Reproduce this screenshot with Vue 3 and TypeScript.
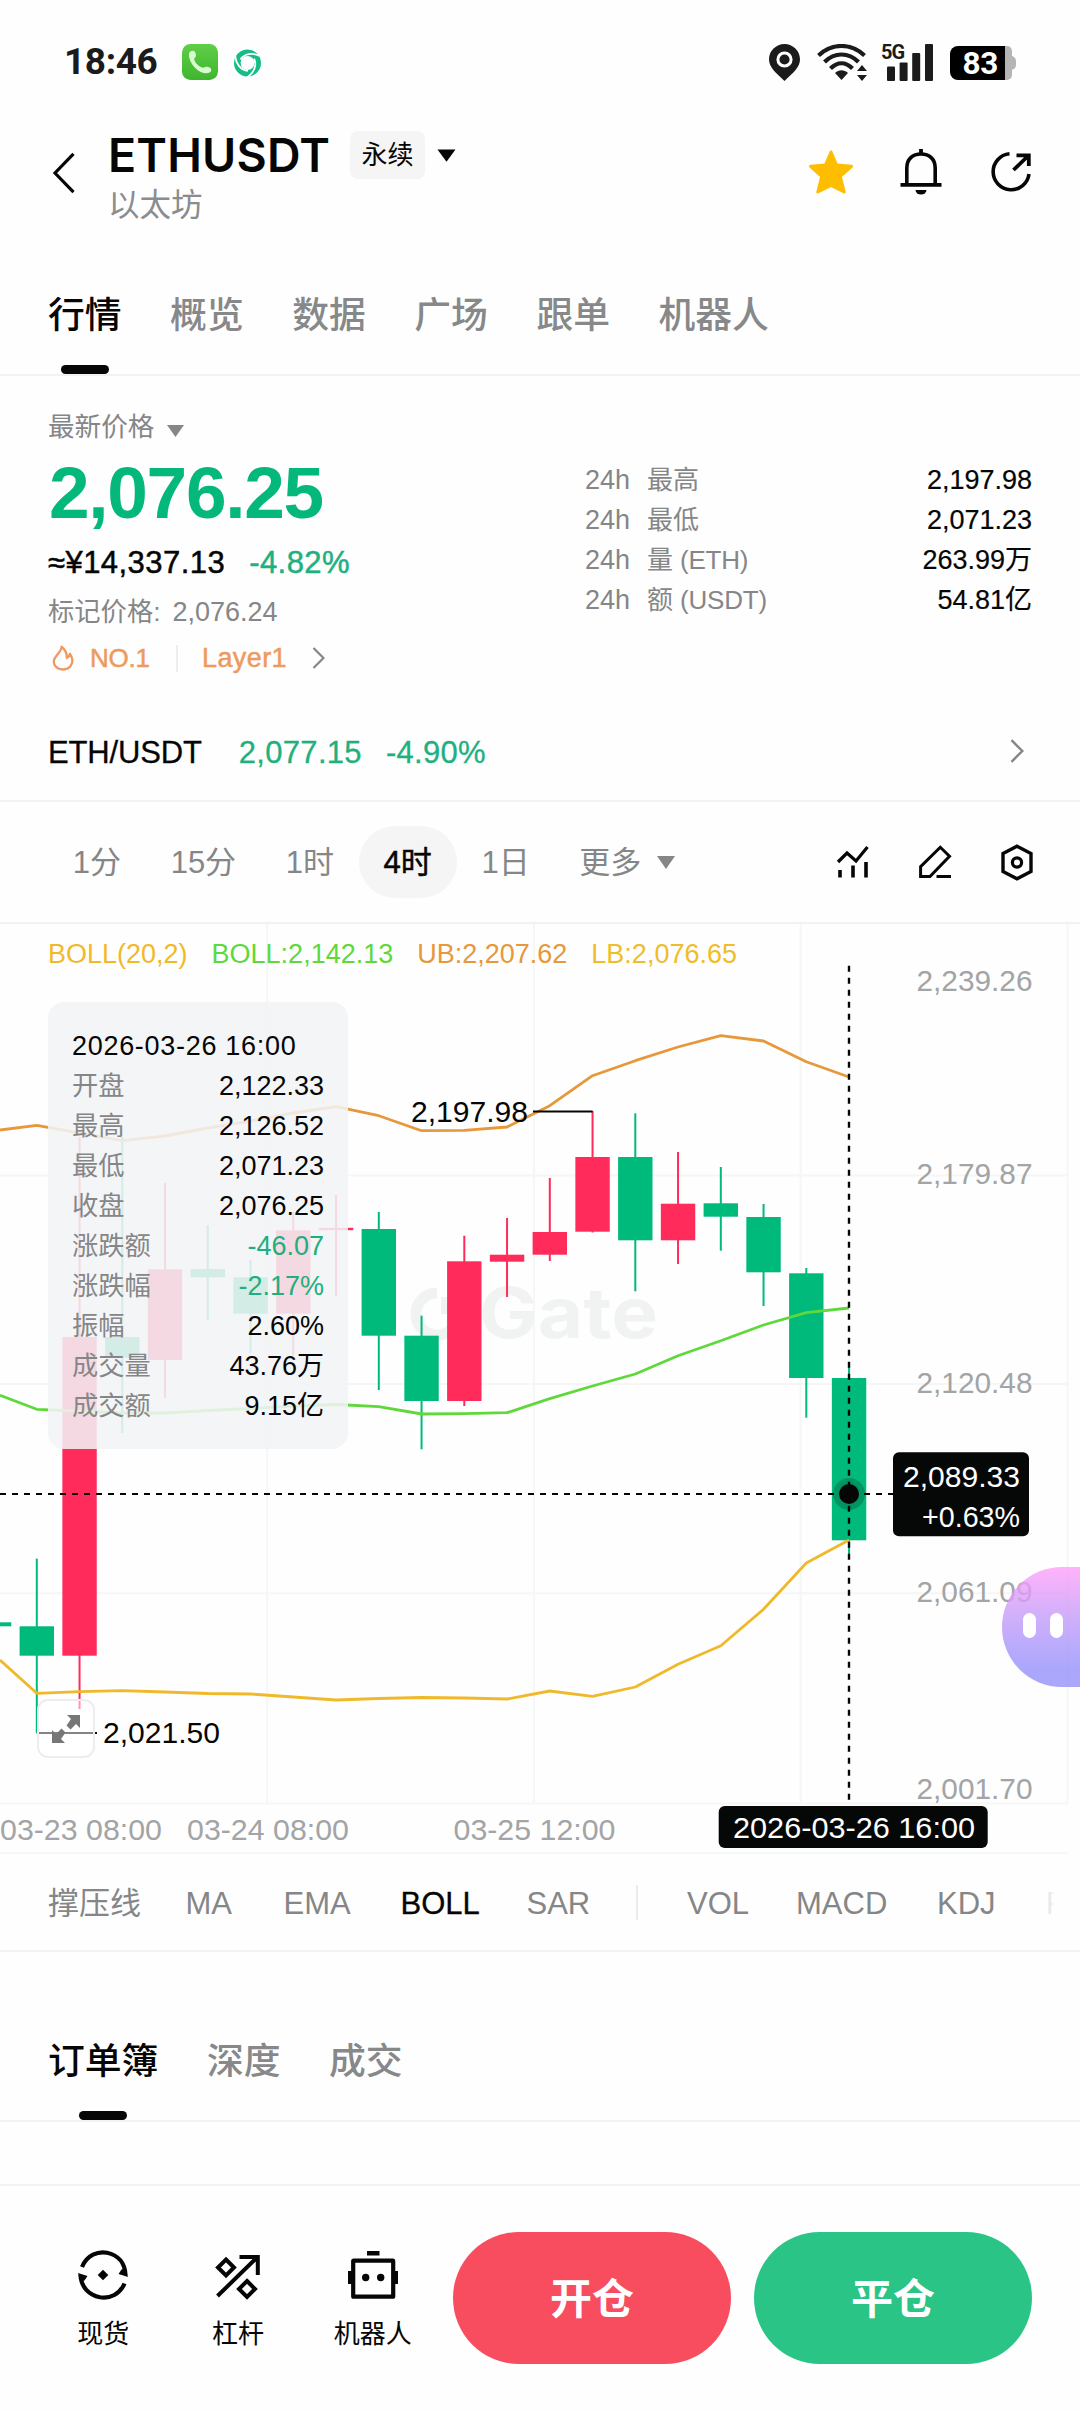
<script setup lang="ts">
interface Candle {
  slot: number
  up: boolean
  top: number
  bottom: number
  high: number
  low: number
}

const tabs: string[] = ['行情', '概览', '数据', '广场', '跟单', '机器人']
const bookTabs: string[] = ['订单簿', '深度', '成交']

const dayStats = [
  { label: '最高', unit: '', value: '2,197.98' },
  { label: '最低', unit: '', value: '2,071.23' },
  { label: '量', unit: '(ETH)', value: '263.99万' },
  { label: '额', unit: '(USDT)', value: '54.81亿' },
]

const frames: string[] = ['1分', '15分', '1时', '4时', '1日']

const tooltipRows = [
  { label: '开盘', value: '2,122.33', green: false },
  { label: '最高', value: '2,126.52', green: false },
  { label: '最低', value: '2,071.23', green: false },
  { label: '收盘', value: '2,076.25', green: false },
  { label: '涨跌额', value: '-46.07', green: true },
  { label: '涨跌幅', value: '-2.17%', green: true },
  { label: '振幅', value: '2.60%', green: false },
  { label: '成交量', value: '43.76万', green: false },
  { label: '成交额', value: '9.15亿', green: false },
]

// Candle geometry on the chart canvas: slot index and vertical extents.
const raw: [number, number, number, number, number, number][] = [
  [-1, 0, 1622.3, 1626.3, 1622.3, 1626.3],
  [0, 0, 1626.3, 1655.7, 1558.7, 1732.7],
  [1, 1, 1337, 1655.7, 1137, 1709],
  [2, 0, 1337, 1357.7, 1137, 1433],
  [3, 1, 1269.3, 1360, 1183, 1398],
  [4, 0, 1269, 1277.3, 1225, 1320],
  [5, 0, 1277.3, 1313.7, 1260, 1353],
  [6, 1, 1230.3, 1313.7, 1212, 1355],
  [7, 1, 1227.8, 1230.2, 1195, 1296],
  [8, 0, 1229, 1335.7, 1212, 1390],
  [9, 0, 1335.7, 1401, 1315.7, 1449.3],
  [10, 1, 1261.3, 1401, 1235.7, 1406],
  [11, 1, 1254.7, 1261.7, 1218, 1297],
  [12, 1, 1232, 1254.7, 1178, 1261],
  [13, 1, 1157, 1231.7, 1111, 1232.5],
  [14, 0, 1157, 1240.3, 1113.3, 1291.3],
  [15, 1, 1203.7, 1240.3, 1152, 1264],
  [16, 0, 1203.3, 1216.7, 1167, 1250.7],
  [17, 0, 1217, 1272.3, 1204, 1306],
  [18, 0, 1273.3, 1378, 1268, 1417.7],
  [19, 0, 1378, 1540.3, 1362.7, 1554],
]
const candles: Candle[] = raw.map(([slot, up, top, bottom, high, low]) => ({
  slot, up: up === 1, top, bottom, high, low,
}))

const cx = (slot: number): number => 36.8 + 42.75 * slot
const line = (start: number, ys: number[]): string =>
  `0,${start} ` + ys.map((y, i) => `${cx(i).toFixed(1)},${y}`).join(' ')

const upper = line(1130, [1125.3, 1133, 1140.7, 1136, 1128, 1121, 1113, 1106.7, 1115.7, 1130.7, 1130.3, 1127, 1105.7, 1075.7, 1060.7, 1047, 1035.7, 1041, 1061.7, 1077])
const middle = line(1395.3, [1409.3, 1411, 1413, 1413, 1410.5, 1408.5, 1406, 1404.5, 1406.7, 1414, 1413.7, 1412.7, 1398.7, 1386, 1374, 1355.7, 1340.7, 1325, 1312.7, 1308])
const lower = line(1660, [1693.3, 1691.7, 1690.7, 1692, 1693.5, 1694, 1697, 1700, 1698.5, 1697.5, 1698, 1699, 1691, 1696.3, 1687, 1664.3, 1645.7, 1609.3, 1563, 1540])

const gridX: number[] = [267.2, 534, 800.7, 1067.6]
const gridY: number[] = [1175.5, 1384, 1593.3, 1803.5]
const priceAxis = [
  { y: 991, text: '2,239.26' },
  { y: 1183.7, text: '2,179.87' },
  { y: 1392.7, text: '2,120.48' },
  { y: 1602, text: '2,061.09' },
  { y: 1798.7, text: '2,001.70' },
]
const timeAxis = [
  { x: 0, text: '03-23 08:00' },
  { x: 187, text: '03-24 08:00' },
  { x: 453.5, text: '03-25 12:00' },
]
</script>

<template>
  <div class="page">
    <header class="status">
      <span class="clock">18:46</span>
      <svg class="phone" width="36" height="36" viewBox="0 0 36 36">
        <defs>
          <linearGradient id="ph" x1="0" y1="0" x2="0" y2="1">
            <stop offset="0" stop-color="#5fcf47" /><stop offset="1" stop-color="#3fb52f" />
          </linearGradient>
        </defs>
        <rect width="36" height="36" rx="8.500" fill="url(#ph)" />
        <path d="M7 9.200c1.500-2.600 4.400-2.900 5.600-1.800 1.300 1.300 1.900 4.400 0.900 5.700-1.600 1.600-1.700 2.200-0.600 4.200 1.400 2.600 3.600 4.900 6.500 6 1.800 0.700 2.300 0.300 3.500-0.200 1.400-0.700 5 0.100 5.900 1.400 1 1.400 0.400 3.700-1.700 4.300-4.500 1.200-9.600-0.700-13.400-4.400C9.300 20.200 6.300 13.500 7 9.200z" fill="#d9fbd0" />
      </svg>
      <svg class="swirl" width="29" height="28" viewBox="-14.500 -14 29 28">
        <circle r="10.200" fill="none" stroke="#14bd87" stroke-width="6.600" />
        <g fill="none" stroke="#fefefe" stroke-width="1.800">
          <path v-for="a in [0, 120, 240]" :key="a" :transform="`rotate(${a})`" d="M-7-3.500C-3-9.500 5-10.500 12.500-7" />
        </g>
      </svg>
      <span class="grow"></span>
      <svg class="pin" width="31" height="37" viewBox="0 0 31 37">
        <path d="M15.500 0C24 0 31 6.900 31 15.300 31 23.500 24 29 15.500 37 7 29 0 23.500 0 15.300 0 6.900 7 0 15.500 0z" fill="#1b1b1b" />
        <circle cx="15.500" cy="15.500" r="6.600" fill="none" stroke="#fff" stroke-width="3" />
      </svg>
      <svg class="wifi" width="52" height="37" viewBox="0 0 52 37">
        <g fill="none" stroke="#1b1b1b" stroke-width="4.200">
          <path d="M1.500 11.500C15-1.200 34-1.200 47.500 11.500" />
          <path d="M7.500 18C17.500 8 31.500 8 41.500 18" />
          <path d="M13.500 24.500C20.500 17.500 28.500 17.500 35.500 24.500" />
        </g>
        <path d="M18 29c4-3.600 9-3.600 13 0l-6.500 7z" fill="#1b1b1b" />
        <path d="M40 27l5-6 5 6zM40 31h10l-5 6z" fill="#1b1b1b" />
      </svg>
      <div class="signal">
        <span class="net">5G</span>
        <svg width="47" height="37" viewBox="0 0 47 37">
          <g fill="#1b1b1b">
            <rect x="0" y="22.500" width="8" height="14.500" rx="1" /><rect x="12.600" y="18.500" width="8" height="18.500" rx="1" />
            <rect x="25.200" y="9" width="8" height="28" rx="1" /><rect x="38" y="0" width="8" height="37" rx="1" />
          </g>
        </svg>
      </div>
      <div class="battery"><span>83</span><i></i></div>
    </header>

    <section class="head">
      <svg class="back" width="24" height="42" viewBox="0 0 24 42">
        <path d="M21.500 1.800L3 21l18.500 19.200" fill="none" stroke="#060606" stroke-width="3.200" />
      </svg>
      <div class="names">
        <div class="title-row">
          <h1>ETHUSDT</h1>
          <span class="badge">永续</span>
          <svg width="19" height="13" viewBox="0 0 19 13"><path d="M0.500 0.500h18L9.500 12.800z" fill="#060606" /></svg>
        </div>
        <div class="alias">以太坊</div>
      </div>
      <div class="actions">
        <svg width="46" height="46" viewBox="0 0 46 46">
          <path d="M23 3l5.600 13 14.900 1.300-11.200 10 3.900 15.700L23 36.500 9.800 43l3.900-15.700L2.500 17.300 17.400 16z" fill="#ffbd00" stroke="#ffbd00" stroke-width="3" stroke-linejoin="round" />
        </svg>
        <svg width="42" height="46" viewBox="0 0 42 46">
          <path d="M6.800 35V19C6.800 10 12.700 5 21 5s14.200 5 14.200 14v16" fill="none" stroke="#060606" stroke-width="3.600" />
          <path d="M21 0v5M0.500 35.800h41" stroke="#060606" stroke-width="3.800" />
          <path d="M15.500 41h11a5.500 4.500 0 0 1-11 0z" fill="#060606" />
        </svg>
        <svg width="42" height="42" viewBox="0 0 42 42">
          <path d="M19.500 2.800A18 18 0 1 0 39 23" fill="none" stroke="#060606" stroke-width="3.600" />
          <path d="M26.500 4.300h12.300V15M38 5L23.500 19" fill="none" stroke="#060606" stroke-width="3.800" />
        </svg>
      </div>
    </section>

    <nav class="tabs">
      <span v-for="(t, i) in tabs" :key="t" :class="{ on: i === 0 }">{{ t }}</span>
    </nav>

    <section class="quote">
      <div class="quote-main">
        <div class="left">
          <div class="r1">最新价格<svg width="17" height="12" viewBox="0 0 17 12"><path d="M0 0h17L8.500 12z" fill="#858687" /></svg></div>
          <div class="price">2,076.25</div>
          <div class="r2"><span>≈¥14,337.13</span><span class="green">-4.82%</span></div>
          <div class="r3"><span>标记价格:</span><span class="num">2,076.24</span></div>
          <div class="r4">
            <svg width="22" height="26" viewBox="0 0 22 26">
              <path d="M9.500 1.800C10 6 4 9.500 2.200 14.500 0.500 20 5 24.500 11 24.500s10.200-4.500 9.200-10.500c-.4-2.500-1.400-4-2.200-5.200-.7 2.200-1.500 3.400-3.200 4.200C15 8 12.500 4 9.500 1.800z" fill="none" stroke="#ee9a5e" stroke-width="2.300" stroke-linejoin="round" />
            </svg>
            <span class="rank">NO.1</span><i></i><span class="layer">Layer1</span>
            <svg width="13" height="22" viewBox="0 0 13 22"><path d="M1.500 1l10 10-10 10" fill="none" stroke="#858687" stroke-width="2.200" /></svg>
          </div>
        </div>
        <div class="stats">
          <div v-for="s in dayStats" :key="s.label" class="stat">
            <span class="h">24h</span><span class="k">{{ s.label }}</span><span class="u">{{ s.unit }}</span><b>{{ s.value }}</b>
          </div>
        </div>
      </div>
      <div class="spot">
        <span>ETH/USDT</span><span class="green p">2,077.15</span><span class="green c">-4.90%</span>
        <svg width="14" height="24" viewBox="0 0 14 24"><path d="M1.500 1.200l10.800 10.800L1.500 22.800" fill="none" stroke="#858687" stroke-width="2.400" /></svg>
      </div>
    </section>

    <section class="frames">
      <span v-for="f in frames" :key="f" :class="{ pill: f === '4时' }">{{ f }}</span>
      <span class="more">更多<svg width="18" height="13" viewBox="0 0 18 13"><path d="M0 0h18L9 13z" fill="#858687" /></svg></span>
      <span class="grow"></span>
      <svg width="34" height="34" viewBox="0 0 34 34">
        <path d="M2 17l9-9 9 8L31.500 2" fill="none" stroke="#060606" stroke-width="3.200" />
        <path d="M4 25v7.500M17 20.500v12M30 17v15.500" stroke="#060606" stroke-width="3.600" />
      </svg>
      <svg width="34" height="34" viewBox="0 0 34 34">
        <path d="M2.600 31.500v-9.800L22.300 2.300l9.200 9L12 31.500z" fill="none" stroke="#060606" stroke-width="3" />
        <path d="M18.500 31.500H33" stroke="#060606" stroke-width="3" />
      </svg>
      <svg width="34" height="37" viewBox="0 0 34 37">
        <path d="M17 2.200l14 7.400v17.800l-14 7.400-14-7.400V9.600z" fill="none" stroke="#060606" stroke-width="3.400" />
        <circle cx="17" cy="18.500" r="4.600" fill="none" stroke="#060606" stroke-width="3.200" />
      </svg>
    </section>

    <section class="chart">
      <svg class="canvas" width="1080" height="930" viewBox="0 924 1080 930">
        <g stroke="#f5f6f6" stroke-width="2">
          <line v-for="x in gridX" :key="x" :x1="x" :x2="x" y1="924" y2="1803.500" />
          <line v-for="y in gridY" :key="y" x1="0" x2="1067.600" :y1="y" :y2="y" />
          <line x1="0" x2="1067.600" y1="1853" y2="1853" />
        </g>
        <g class="mark">
          <path d="M437 1293a21 21 0 1 0 21 21" fill="none" stroke="#f1f3f3" stroke-width="11" />
          <rect x="441" y="1297" width="17" height="17" fill="#f1f3f3" />
          <text x="479" y="1338" textLength="179" lengthAdjust="spacingAndGlyphs">Gate</text>
        </g>
        <g v-for="c in candles" :key="c.slot" :fill="c.up ? '#ff2c5b' : '#00ba7c'">
          <rect :x="cx(c.slot) - 1" :y="c.high" width="2" :height="c.low - c.high" />
          <rect :x="cx(c.slot) - 17.200" :y="c.top" width="34.400" :height="c.bottom - c.top" />
        </g>
        <g fill="none" stroke-width="2.800" stroke-linejoin="round">
          <polyline :points="upper" stroke="#e6983a" />
          <polyline :points="middle" stroke="#5fd83b" />
          <polyline :points="lower" stroke="#efb92a" />
        </g>
        <g class="axis">
          <text v-for="p in priceAxis" :key="p.text" x="916.500" :y="p.y" textLength="116" lengthAdjust="spacingAndGlyphs">{{ p.text }}</text>
          <text v-for="t in timeAxis" :key="t.text" :x="t.x" y="1840" textLength="162" lengthAdjust="spacingAndGlyphs">{{ t.text }}</text>
        </g>
        <g class="note">
          <path d="M533 1111.500H592.600M36.800 1733H97" stroke="#060606" stroke-width="2" />
          <text x="411" y="1122" textLength="117" lengthAdjust="spacingAndGlyphs">2,197.98</text>
          <text x="103" y="1743.300" textLength="117" lengthAdjust="spacingAndGlyphs">2,021.50</text>
        </g>
        <g stroke="#060606" stroke-width="2.400" stroke-dasharray="6 6">
          <line x1="849" x2="849" y1="965.700" y2="1802" />
          <line x1="0" x2="893" y1="1494" y2="1494" stroke-width="2" />
        </g>
        <circle cx="849" cy="1494" r="16" fill="#000" fill-opacity="0.200" />
        <circle cx="849" cy="1494" r="10" fill="#060606" />
        <rect x="893" y="1452.300" width="136" height="84" rx="6" fill="#060808" />
        <rect x="718.700" y="1806" width="269" height="42" rx="6" fill="#060808" />
        <g class="tag">
          <text x="903" y="1487" textLength="117" lengthAdjust="spacingAndGlyphs">2,089.33</text>
          <text x="922" y="1527" textLength="98" lengthAdjust="spacingAndGlyphs">+0.63%</text>
          <text x="733" y="1838" textLength="242" lengthAdjust="spacingAndGlyphs">2026-03-26 16:00</text>
        </g>
      </svg>
      <div class="legend">
        <span class="l1">BOLL(20,2)</span><span class="l2">BOLL:2,142.13</span><span class="l3">UB:2,207.62</span><span class="l4">LB:2,076.65</span>
      </div>
      <div class="tip">
        <div class="date">2026-03-26 16:00</div>
        <div v-for="r in tooltipRows" :key="r.label" class="tip-row">
          <span>{{ r.label }}</span><b :class="{ green: r.green }">{{ r.value }}</b>
        </div>
      </div>
      <div class="expand">
        <svg width="30" height="30" viewBox="0 0 30 30">
          <g fill="#777">
            <path d="M16 1H29V14L25 10 19.500 15.500 15.500 11.500 20 5z" />
            <path d="M14 29H1V16L5 20 10.500 14.500l4 4L10 25z" />
          </g>
        </svg>
      </div>
      <div class="bot"><i></i><i></i></div>
    </section>

    <section class="indicators">
      <span>撑压线</span><span>MA</span><span>EMA</span><span class="on">BOLL</span><span>SAR</span><i></i>
      <span>VOL</span><span>MACD</span><span>KDJ</span><span class="fade">R</span>
    </section>

    <nav class="tabs book">
      <span v-for="(t, i) in bookTabs" :key="t" :class="{ on: i === 0 }">{{ t }}</span>
    </nav>
    <div class="spacer"></div>

    <footer class="bottom">
      <div class="tool">
        <svg width="50" height="50" viewBox="0 0 50 50">
          <g fill="none" stroke="#060606" stroke-width="4.200">
            <path d="M4 17C9 5 20 1 29 2.700 40 5 47 13 47.500 25" />
            <path d="M46.500 33.500C42 44 32 49 22 47.300 11 45 3 37 2.500 25" />
          </g>
          <path d="M50 27l-9.500-3 3-4.500 4-1zM0 23l9.500 3-3 4.500-4 1z" fill="#060606" />
          <path d="M25 19.700L30.300 25 25 30.300 19.700 25z" fill="#060606" />
        </svg>
        <span>现货</span>
      </div>
      <div class="tool">
        <svg width="50" height="50" viewBox="0 0 50 50">
          <g fill="none" stroke="#060606" stroke-width="4">
            <path d="M4.500 46L43.500 8M26.500 7h18.300v18" />
            <path d="M13 9.500l8 8-8 8-8-8zM34 31l8 8-8 8-8-8z" />
          </g>
        </svg>
        <span>杠杆</span>
      </div>
      <div class="tool">
        <svg width="50" height="50" viewBox="0 0 50 50">
          <rect x="5.200" y="10.700" width="40" height="36" rx="0.500" fill="none" stroke="#060606" stroke-width="4.200" />
          <path d="M19 1h12.500v4.500H19zM0 21h4v13H0zM46 21h4v13h-4z" fill="#060606" />
          <circle cx="17.700" cy="27.500" r="3.700" fill="#060606" /><circle cx="32.700" cy="27.500" r="3.700" fill="#060606" />
        </svg>
        <span>机器人</span>
      </div>
      <button class="open">开仓</button>
      <button class="close">平仓</button>
    </footer>
  </div>
</template>

<style>
body { background: #fefefe; }
</style>

<style scoped>
.page {
  width: 1080px;
  height: 2412px;
  overflow: hidden;
  display: flex;
  flex-direction: column;
  background: #fefefe;
  color: #060606;
  font-family: "Liberation Sans", "Noto Sans CJK SC", sans-serif;
}
.page > * { flex: none; box-sizing: border-box; }
svg { display: block; flex: none; }
.grow { flex: 1; }
.green { color: #1fb07f; }

.status { height: 124px; padding: 44px 64px 0 64px; display: flex; align-items: flex-start; }
.clock { width: 118px; height: 36px; font: 700 37px/36px Roboto, sans-serif; letter-spacing: -0.400px; color: #1b1b1b; }
.swirl { margin: 5px 0 0 15px; }
.wifi { margin-left: 17px; }
.signal { position: relative; width: 52px; margin-left: 12px; }
.signal svg { margin-left: 6px; }
.net { position: absolute; left: 0; top: -2px; font: 700 20px/20px Roboto, sans-serif; letter-spacing: -1px; color: #1b1b1b; }
.battery { position: relative; width: 66px; height: 34px; margin: 2px 0 0 17px; display: flex; align-items: center; }
.battery span {
  width: 55px; height: 34px; box-sizing: border-box; padding-left: 12.500px; background: #000; color: #fff;
  border-radius: 8px 0 0 8px; font: 700 31.500px/35px Roboto, sans-serif; letter-spacing: -0.200px;
}
.battery i { width: 7px; height: 34px; background: #b5b5b5; border-radius: 0 5px 5px 0; position: relative; }
.battery i::after { content: ""; position: absolute; left: 5px; top: 10px; width: 6px; height: 14px; background: #b5b5b5; border-radius: 0 5px 5px 0; }

.head { height: 136px; padding: 0 48px 0 52px; display: flex; align-items: flex-start; }
.back { margin-top: 28px; }
.names { margin-left: 31px; flex: 1; }
.title-row { display: flex; align-items: center; height: 62px; }
h1 { margin: 0 0 0 1px; width: 242px; font: 600 46.500px/62px Inter, sans-serif; letter-spacing: 0.200px; white-space: nowrap; }
.badge { width: 75px; height: 48px; border-radius: 8px; background: #f5f5f5; text-align: center; font-size: 26px; line-height: 48px; margin-right: 12px; }
.alias { margin-left: 1px; height: 36px; line-height: 38px; font-size: 31.500px; color: #8a8c8e; }
.actions { display: flex; align-items: center; padding-top: 25px; gap: 46px; }
.actions svg:last-child { margin-left: 2px; }

.tabs { height: 116px; border-bottom: 2px solid #f2f2f2; padding: 0 48px; display: flex; gap: 48.500px; font-size: 36.800px; font-weight: 500; color: #868889; }
.tabs span { position: relative; height: 114px; line-height: 112px; white-space: nowrap; }
.tabs .on { color: #060606; }
.tabs .on::after { content: ""; position: absolute; left: 50%; bottom: 0; width: 48px; height: 9px; margin-left: -24px; border-radius: 5px; background: #060606; }

.quote { height: 426px; border-bottom: 2px solid #f2f2f2; padding: 0 48px; }
.quote-main { display: flex; height: 342px; }
.left { width: 537px; padding-top: 34px; color: #858687; font-size: 26.300px; }
.left > div { display: flex; align-items: center; white-space: nowrap; }
.r1 { height: 34px; line-height: 35px; font-size: 26.600px; }
.r1 svg { margin: 7px 0 0 13px; }
.left .price { height: 70px; margin: 14px 0 0 1px; font-size: 73px; font-weight: 700; line-height: 72px; letter-spacing: -1.300px; color: #04b87b; }
.left .r2 { height: 40px; line-height: 40px; margin-top: 15px; gap: 24px; font-size: 31px; letter-spacing: 0.450px; color: #060606; -webkit-text-stroke: 0.500px; }
.r3 { height: 34px; line-height: 34px; margin-top: 12px; gap: 12px; }
.num { font-size: 27px; }
.r4 { height: 34px; line-height: 34px; margin-top: 12px; padding-left: 4px; color: #ee9a5e; -webkit-text-stroke: 0.500px; }
.rank { width: 87px; padding-left: 16px; font-size: 26px; letter-spacing: -0.200px; }
.r4 i { width: 2px; height: 27px; margin-left: -1px; background: #eee; }
.layer { width: 110px; padding-left: 24px; font-size: 27px; letter-spacing: 0.400px; }
.stats { flex: 1; padding-top: 84px; color: #858687; font-size: 26px; }
.stat { height: 40px; line-height: 40px; display: flex; white-space: nowrap; }
.h { width: 62px; font-size: 27px; }
.u { margin-left: 7px; letter-spacing: -0.200px; }
.stat b { margin-left: auto; font-size: 27px; font-weight: 400; color: #060606; -webkit-text-stroke: 0.200px; }
.spot { display: flex; align-items: center; height: 70px; font-size: 31px; letter-spacing: 0.300px; -webkit-text-stroke: 0.300px; line-height: 70px; white-space: nowrap; }
.spot span:first-child { letter-spacing: -0.150px; }
.spot .p { margin-left: 37px; }
.spot .c { margin-left: 24px; }
.spot svg { margin: -4px 8px 0 auto; }

.frames { height: 122px; border-bottom: 2px solid #f2f2f2; padding: 0 46px 0 48px; display: flex; align-items: center; font-size: 31px; color: #858687; }
.frames > span:not(.grow) { height: 72px; line-height: 73px; padding: 0 24.800px; white-space: nowrap; }
.frames .pill { background: #f5f5f5; border-radius: 36px; color: #060606; -webkit-text-stroke: 0.500px; }
.frames .more { display: flex; align-items: center; }
.more svg { margin-left: 16px; }
.frames > svg + svg { margin-left: 48px; }

.chart { position: relative; height: 930px; overflow: hidden; }
.canvas { font-family: "Liberation Sans", sans-serif; font-size: 29.500px; }
.mark text { font: 700 70px Inter, sans-serif; fill: #f1f3f3; }
.axis text { fill: #a2a4a5; }
.note text { fill: #060606; }
.tag text { fill: #fff; }
.legend { position: absolute; left: 48px; top: 12px; display: flex; gap: 24px; height: 36px; line-height: 36px; font-size: 27px; white-space: nowrap; }
.l1 { color: #f0b92c; }
.l2 { color: #5fd83b; }
.l3 { color: #e6983a; }
.l4 { color: #efbd2a; }
.tip { position: absolute; left: 48px; top: 78px; width: 300px; height: 447px; box-sizing: border-box; padding: 24px 24px 0 24px; border-radius: 16px; background: rgba(242, 244, 246, 0.870); font-size: 26.300px; }
.date { height: 40px; line-height: 41px; font-size: 27px; letter-spacing: 0.700px; white-space: nowrap; }
.tip-row { display: flex; justify-content: space-between; height: 40px; line-height: 40px; color: #858687; white-space: nowrap; }
.tip-row b { font-weight: 400; font-size: 27px; color: #060606; }
.tip-row .green { color: #1fae7e; }
.expand { position: absolute; left: 37px; top: 775px; width: 54px; height: 55px; border: 2px solid #ededed; border-radius: 11px; background: rgba(255, 255, 255, 0.500); display: flex; align-items: center; justify-content: center; }
.bot { position: absolute; left: 1002px; top: 643px; width: 136px; height: 120px; border-radius: 60px; background: linear-gradient(rgba(255, 160, 249, 0.800), rgba(192, 155, 250, 0.800) 45%, rgba(152, 148, 251, 0.820) 85%); }
.bot i { position: absolute; top: 46px; left: 21px; width: 13px; height: 25px; border-radius: 7px; background: #fff; }
.bot i + i { left: 48px; }

.indicators { height: 98px; border-bottom: 2px solid #f2f2f2; padding: 0 0 0 48px; display: grid; align-items: center; grid-template-columns: 137.500px 98px 117px 126px 109.500px 51px 109px 141px 109px 28px; font-size: 31px; line-height: 99px; color: #858687; white-space: nowrap; }
.indicators span { height: 96px; }
.indicators .on { color: #060606; -webkit-text-stroke: 0.300px; }
.indicators i { width: 2px; height: 35px; background: #ececec; }
.indicators .fade { -webkit-mask-image: linear-gradient(90deg, rgba(0, 0, 0, 0.300), transparent 9px); mask-image: linear-gradient(90deg, rgba(0, 0, 0, 0.300), transparent 9px); }
.book { height: 170px; }
.book span { height: 168px; line-height: 220px; }
.spacer { height: 62px; }

.bottom { height: 228px; border-top: 2px solid #f2f2f2; padding: 46px 48px 0 36px; display: flex; }
.tool { width: 134.700px; display: flex; flex-direction: column; align-items: center; padding-top: 18px; box-sizing: border-box; font-size: 26px; line-height: 34px; gap: 17px; }
button { width: 278px; height: 132px; border: 0; border-radius: 66px; color: #fff; font: 700 42px/128px "Noto Sans CJK SC", sans-serif; padding: 0 0 4px; }
.open { margin-left: auto; background: #f84c5f; }
.close { margin-left: 23px; background: #2bc487; }
</style>
